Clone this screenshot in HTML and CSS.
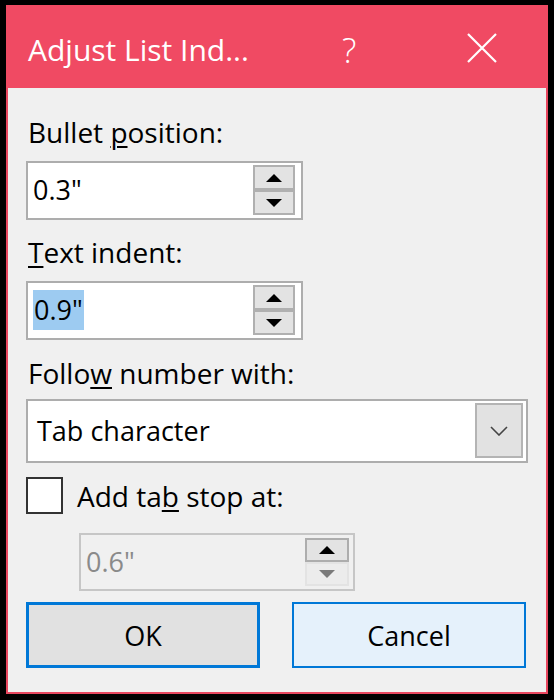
FILE: index.html
```html
<!DOCTYPE html>
<html>
<head>
<meta charset="utf-8">
<link rel="stylesheet" href="styles.css">
</head>
<body>
<div class="dialog">
  <div class="titlebar">
    <span class="title">Adjust List Ind...</span>
    <span class="help">?</span>
    <svg class="close" width="30" height="30" viewBox="0 0 30 30"><path d="M1 1 L29 29 M29 1 L1 29" stroke="#fff" stroke-width="2.2" fill="none"/></svg>
  </div>
  <div class="content">
    <div class="label label1">Bullet <u>p</u>osition:</div>
    <div class="spinbox">
      <span class="value">0.3"</span>
      <div class="spin">
        <div class="sbtn"><span class="arrow up"></span></div>
        <div class="sbtn"><span class="arrow down"></span></div>
      </div>
    </div>
    <div class="label label2"><u>T</u>ext indent:</div>
    <div class="spinbox">
      <span class="value"><span class="sel">0.9"</span></span>
      <div class="spin">
        <div class="sbtn"><span class="arrow up"></span></div>
        <div class="sbtn"><span class="arrow down"></span></div>
      </div>
    </div>
    <div class="label label3">Follo<u>w</u> number with:</div>
    <div class="combo">
      <span class="combo-text">Tab character</span>
      <div class="combo-btn">
        <svg width="18" height="10" viewBox="0 0 18 10"><path d="M1 1 L9 9 L17 1" stroke="#444" stroke-width="1.6" fill="none"/></svg>
      </div>
    </div>
    <div class="check-row">
      <span class="checkbox"></span>
      <span class="check-label">Add ta<u>b</u> stop at:</span>
    </div>
    <div class="spinbox disabled">
      <span class="value">0.6"</span>
      <div class="spin">
        <div class="sbtn"><span class="arrow up"></span></div>
        <div class="sbtn off"><span class="arrow down"></span></div>
      </div>
    </div>
    <div class="buttons">
      <div class="btn ok">OK</div>
      <div class="btn cancel">Cancel</div>
    </div>
  </div>
</div>
</body>
</html>
```
FILE: styles.css
```css
html, body {
  margin: 0;
  padding: 0;
  background: #000;
}
body {
  padding: 5px 6px 6px 6px;
  width: 542px;
  height: 689px;
  font-family: "Open Sans", "Noto Sans", sans-serif;
  font-size: 27px;
  color: #000;
}
.dialog {
  width: 542px;
  height: 689px;
  box-sizing: border-box;
  display: flex;
  flex-direction: column;
}
.titlebar {
  height: 83px;
  background: #f04a63;
  color: #fff;
  display: flex;
  align-items: center;
  padding-left: 22px;
  padding-top: 6px;
  box-sizing: border-box;
  flex: none;
}
.title {
  font-size: 30px;
  width: 314px;
}
.help {
  font-size: 34px;
  font-weight: 300;
  width: 125px;
}
.close {
  display: block;
  margin-top: -4px;
}
.content {
  flex: 1;
  background: #f0f0f0;
  border: 2px solid #e8475f;
  border-top: none;
  padding: 26px 18px 0 18px;
  display: flex;
  flex-direction: column;
  align-items: flex-start;
}
.label {
  font-size: 28px;
  line-height: 36px;
  height: 36px;
  padding-left: 2px;
  white-space: nowrap;
}
.label2 { margin-top: 14px; }
.label3 { margin-top: 15px; }
u {
  text-decoration-thickness: 2px;
  text-underline-offset: 3px;
}
.spinbox {
  margin-top: 11px;
  width: 277px;
  height: 59px;
  box-sizing: border-box;
  border: 2px solid #adadad;
  background: #fff;
  display: flex;
  align-items: center;
  justify-content: space-between;
  padding: 0 6px 1px 5px;
}
.value {
  line-height: 40px;
}
.sel {
  background: #9dcbf1;
  display: inline-block;
  padding: 0 1px;
}
.spin {
  width: 42px;
  display: flex;
  flex-direction: column;
}
.sbtn {
  height: 25px;
  box-sizing: border-box;
  border: 2px solid #b0b0b0;
  background: #e3e3e3;
  display: flex;
  align-items: center;
  justify-content: center;
}
.arrow {
  width: 0;
  height: 0;
  border-left: 8px solid transparent;
  border-right: 8px solid transparent;
}
.arrow.up { border-bottom: 8px solid #000; }
.arrow.down { border-top: 8px solid #000; }
.combo {
  margin-top: 8px;
  width: 502px;
  height: 64px;
  box-sizing: border-box;
  border: 2px solid #adadad;
  background: #fff;
  display: flex;
  align-items: center;
  justify-content: space-between;
  padding: 0 3px 1px 9px;
}
.combo-btn {
  width: 48px;
  height: 55px;
  box-sizing: border-box;
  border: 2px solid #b4b4b4;
  background: #e2e2e2;
  display: flex;
  align-items: center;
  justify-content: center;
}
.check-row {
  margin-top: 14px;
  display: flex;
  align-items: center;
  height: 37px;
}
.checkbox {
  width: 37px;
  height: 37px;
  box-sizing: border-box;
  border: 2px solid #333;
  background: #fff;
}
.check-label {
  font-size: 28px;
  margin-left: 14px;
  line-height: 36px;
}
.spinbox.disabled {
  margin-top: 19px;
  margin-left: 53px;
  width: 276px;
  height: 58px;
  background: #f0f0f0;
  border-color: #c6c6c6;
  color: #8a8a8a;
  padding-right: 4px;
}
.disabled .spin {
  width: 44px;
}
.disabled .sbtn {
  height: 24px;
  border-color: #adadad;
  background: #e3e3e3;
}
.disabled .sbtn.off {
  border-color: #e3e3e3;
  background: #ececec;
}
.disabled .sbtn.off .arrow.down {
  border-top-color: #7a7a7a;
}
.buttons {
  margin-top: 11px;
  display: flex;
  gap: 32px;
}
.btn {
  width: 234px;
  height: 66px;
  box-sizing: border-box;
  border: 3px solid #0078d7;
  background: #e1e1e1;
  display: flex;
  align-items: center;
  justify-content: center;
}
.btn.cancel {
  border-width: 2px;
  background: #e5f1fb;
}
```
